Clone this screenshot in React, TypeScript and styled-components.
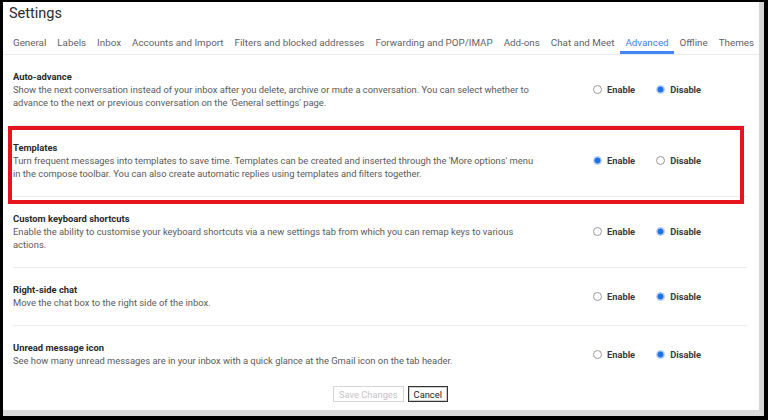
import styled, { createGlobalStyle } from "styled-components";

const GlobalStyles = createGlobalStyle`
  * {
    margin: 0;
    padding: 0;
    box-sizing: border-box;
  }
  html, body {
    width: 768px;
    height: 420px;
    overflow: hidden;
    background: #000;
  }
  body {
    font-family: Roboto, "Liberation Sans", Arial, sans-serif;
    -webkit-font-smoothing: antialiased;
  }
`;

const Window = styled.div`
  margin: 2px 0 0 3px;
  width: 761px;
  height: 414px;
  background: #fff;
  border-right: 5px solid #d6d6d6;
  border-bottom: 6px solid #dcdcdc;
  display: flex;
  flex-direction: column;
`;

const Title = styled.h1`
  height: 26px;
  padding: 2px 0 0 6px;
  font-size: 14.5px;
  font-weight: 400;
  line-height: 20px;
  color: #2b2b2b;
`;

const TabBar = styled.nav`
  display: flex;
  height: 27px;
  padding-left: 4.5px;
  border-bottom: 1px solid #ececec;
`;

const Tab = styled.div<{ $active?: boolean }>`
  display: flex;
  align-items: center;
  height: 100%;
  padding: 5px 5.5px 0;
  border-bottom: 3px solid ${(p) => (p.$active ? "#4285f4" : "transparent")};
  font-size: 9.8px;
  white-space: nowrap;
  color: ${(p) => (p.$active ? "#3d7fee" : "#5f6368")};
`;

const List = styled.div`
  margin: 0 12px 0 10px;
`;

const Row = styled.div<{ $last?: boolean }>`
  position: relative;
  display: flex;
  align-items: center;
  padding: 15px 0 16px;
  border-bottom: 1px solid ${(p) => (p.$last ? "transparent" : "#ececec")};
`;

const Highlight = styled.div`
  position: absolute;
  top: 0;
  left: -5px;
  right: 3px;
  bottom: -8px;
  border: 4px solid #e5141f;
  pointer-events: none;
`;

const Text = styled.div`
  flex: 0 0 580px;
  font-size: 9.4px;
  line-height: 13px;
  white-space: nowrap;
`;

const Name = styled.div`
  font-weight: 700;
  color: #2a2a2a;
`;

const Desc = styled.div`
  color: #5a5a5a;
`;

const Options = styled.div`
  display: flex;
  align-items: center;
  gap: 21px;
`;

const Option = styled.label`
  display: flex;
  align-items: center;
  gap: 5px;
  font-size: 9.3px;
  font-weight: 700;
  color: #3a3a3a;
`;

const Radio = styled.span<{ $checked?: boolean }>`
  width: 9px;
  height: 9px;
  border-radius: 50%;
  border: 1px solid ${(p) => (p.$checked ? "#a9c8fb" : "#9a9a9a")};
  background: ${(p) =>
    p.$checked
      ? "radial-gradient(circle, #1a73e8 0 2.6px, #8fb6f7 3.2px, #fff 4px)"
      : "#fff"};
`;

const Footer = styled.div`
  display: flex;
  justify-content: center;
  gap: 4px;
  padding: 2px 0 0 19px;
`;

const Button = styled.button<{ $disabled?: boolean }>`
  height: 16px;
  padding: 0 5px;
  font-family: Roboto, "Liberation Sans", Arial, sans-serif;
  font-size: 9.3px;
  background: #fff;
  color: ${(p) => (p.$disabled ? "#c4c4c4" : "#222")};
  border: 1px solid ${(p) => (p.$disabled ? "#d6d6d6" : "#333")};
  box-shadow: ${(p) => (p.$disabled ? "none" : "inset 0 0 0 1px #cfcfcf")};
`;

const tabs = [
  "General",
  "Labels",
  "Inbox",
  "Accounts and Import",
  "Filters and blocked addresses",
  "Forwarding and POP/IMAP",
  "Add-ons",
  "Chat and Meet",
  "Advanced",
  "Offline",
  "Themes",
];

type Setting = {
  name: string;
  lines: string[];
  enabled: boolean;
  highlight?: boolean;
};

const settings: Setting[] = [
  {
    name: "Auto-advance",
    lines: [
      "Show the next conversation instead of your inbox after you delete, archive or mute a conversation. You can select whether to",
      "advance to the next or previous conversation on the 'General settings' page.",
    ],
    enabled: false,
  },
  {
    name: "Templates",
    lines: [
      "Turn frequent messages into templates to save time. Templates can be created and inserted through the 'More options' menu",
      "in the compose toolbar. You can also create automatic replies using templates and filters together.",
    ],
    enabled: true,
    highlight: true,
  },
  {
    name: "Custom keyboard shortcuts",
    lines: [
      "Enable the ability to customise your keyboard shortcuts via a new settings tab from which you can remap keys to various",
      "actions.",
    ],
    enabled: false,
  },
  {
    name: "Right-side chat",
    lines: ["Move the chat box to the right side of the inbox."],
    enabled: false,
  },
  {
    name: "Unread message icon",
    lines: [
      "See how many unread messages are in your inbox with a quick glance at the Gmail icon on the tab header.",
    ],
    enabled: false,
  },
];

export default function App() {
  return (
    <>
      <GlobalStyles />
      <Window>
        <Title>Settings</Title>
        <TabBar>
          {tabs.map((t) => (
            <Tab key={t} $active={t === "Advanced"}>
              {t}
            </Tab>
          ))}
        </TabBar>
        <List>
          {settings.map((s, i) => (
            <Row key={s.name} $last={i === settings.length - 1}>
              {s.highlight && <Highlight />}
              <Text>
                <Name>{s.name}</Name>
                {s.lines.map((l) => (
                  <Desc key={l}>{l}</Desc>
                ))}
              </Text>
              <Options>
                <Option>
                  <Radio $checked={s.enabled} />
                  Enable
                </Option>
                <Option>
                  <Radio $checked={!s.enabled} />
                  Disable
                </Option>
              </Options>
            </Row>
          ))}
        </List>
        <Footer>
          <Button $disabled>Save Changes</Button>
          <Button>Cancel</Button>
        </Footer>
      </Window>
    </>
  );
}
